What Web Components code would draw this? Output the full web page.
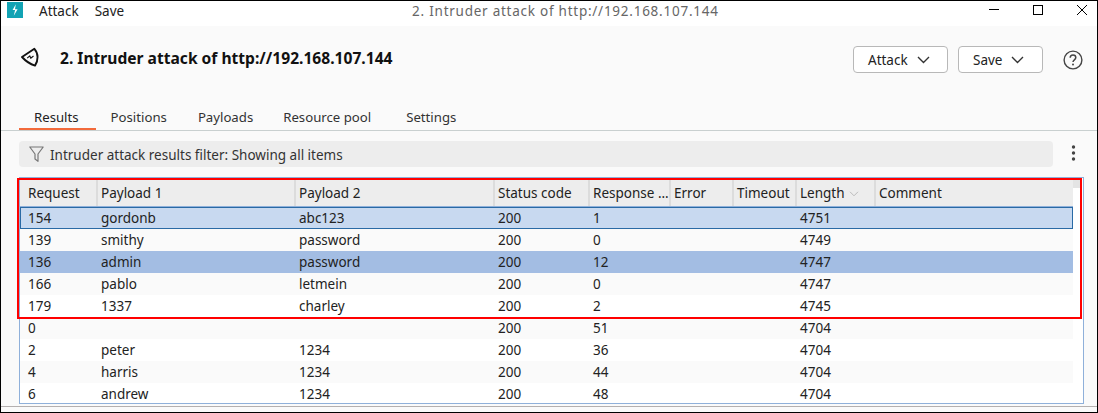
<!DOCTYPE html>
<html>
<head>
<meta charset="utf-8">
<title>Intruder attack</title>
<style>
  html, body { margin: 0; padding: 0; height: 100%; overflow: hidden; background: #fafafa; }
  body { font-family: "Noto Sans", "Noto Sans CJK KR", sans-serif; font-size: 13.5px; color: #222; }
</style>
</head>
<body>
<attack-window>
  <title-bar slot="top" heading="2. Intruder attack of http://192.168.107.144"></title-bar>
  <attack-header heading="2. Intruder attack of http://192.168.107.144"></attack-header>
  <tab-bar></tab-bar>
  <filter-bar>Intruder attack results filter: Showing all items</filter-bar>
  <results-table></results-table>
</attack-window>

<script>
const attack_window = document.createElement('template');
attack_window.innerHTML = /*html*/ `
<style>
  :host {
    display: flex;
    flex-direction: column;
    position: relative;
    box-sizing: border-box;
    width: 1098px;
    height: 413px;
    border: 1px solid #000;
    background: #fafafa;
    overflow: hidden;
  }
  #bottom {
    margin-top: 2px;
    height: 1px;
    background: #b4b0b0;
  }
</style>
<slot name="top"></slot>
<slot></slot>
<div id="bottom"></div>
`;

class AttackWindow extends HTMLElement {
  constructor() {
    super();
    this.attachShadow({ mode: 'open' });
    this.shadowRoot.appendChild(attack_window.content.cloneNode(true));
  }
}

const title_bar = document.createElement('template');
title_bar.innerHTML = /*html*/ `
<style>
  :host {
    display: flex;
    align-items: flex-start;
    height: 25px;
    background: #fff;
    font-size: 13.5px;
    line-height: 18px;
  }
  svg { display: block; }
  #logo { margin: 1px 0 0 6px; }
  #menu { display: flex; gap: 16px; margin: 1px 0 0 16px; }
  #title { flex: 1; margin: 1px 0 0 288px; color: #666; letter-spacing: .75px; white-space: nowrap; }
  #controls { display: flex; margin-top: 2px; }
</style>
<svg id="logo" width="16" height="16" viewBox="0 0 16 16">
  <rect width="16" height="16" fill="#12a3b4"/>
  <path d="M8.8 2.2 5.6 8h2.5L6.8 13.8l3.8-6.6H8z" fill="#fff"/>
</svg>
<div id="menu"><span>Attack</span><span>Save</span></div>
<div id="title"></div>
<div id="controls">
  <svg width="44" height="14" viewBox="0 0 44 14"><path d="M0 6.5h10" stroke="#000" stroke-width="1"/></svg>
  <svg width="44" height="14" viewBox="0 0 44 14"><rect x=".5" y="2.5" width="9" height="9" fill="none" stroke="#000" stroke-width="1"/></svg>
  <svg width="20" height="14" viewBox="0 0 20 14"><path d="M0 2l10 10M10 2 0 12" stroke="#000" stroke-width="1"/></svg>
</div>
`;

class TitleBar extends HTMLElement {
  constructor() {
    super();
    this.attachShadow({ mode: 'open' });
    this.shadowRoot.appendChild(title_bar.content.cloneNode(true));
  }

  connectedCallback() {
    this.shadowRoot.querySelector('#title').textContent = this.getAttribute('heading');
  }
}

const attack_header = document.createElement('template');
attack_header.innerHTML = /*html*/ `
<style>
  :host {
    display: flex;
    align-items: flex-start;
    height: 74px;
    box-sizing: border-box;
    padding: 20px 14px 0 19px;
  }
  #mark { margin-top: 1px; display: block; }
  h1 {
    margin: 0 0 0 20px;
    font-size: 15.6px;
    font-weight: 700;
    line-height: 24px;
    color: #111;
    flex: 1;
  }
  #help { margin: 4px 0 0 20px; display: block; }
  drop-button + drop-button { margin-left: 10px; }
</style>
<svg id="mark" width="20" height="20" viewBox="0 0 20 20" fill="none" stroke="#111" stroke-width="1.9" stroke-linejoin="round">
  <path d="M2 10 14.4 1.8C18.6 6.4 18.4 13.6 15 18.6 10.4 17.2 5.6 14 2 10z"/>
  <path d="M7.2 11.2l2.6-2.4.9 2.4 2.8-2.2" stroke-width="1.1"/>
</svg>
<h1></h1>
<drop-button style="width:95px">Attack</drop-button>
<drop-button style="width:85px">Save</drop-button>
<svg id="help" width="20" height="20" viewBox="0 0 20 20" fill="none" stroke="#444" stroke-width="1.4">
  <circle cx="10" cy="10" r="8.9"/>
  <path d="M7.2 7.8C7.2 6.1 8.5 5 10 5s2.8 1.1 2.8 2.6c0 2.1-2.8 2.3-2.8 4.4" stroke-width="1.5"/>
  <circle cx="10" cy="14.6" r="1" fill="#444" stroke="none"/>
</svg>
`;

class AttackHeader extends HTMLElement {
  constructor() {
    super();
    this.attachShadow({ mode: 'open' });
    this.shadowRoot.appendChild(attack_header.content.cloneNode(true));
  }

  connectedCallback() {
    this.shadowRoot.querySelector('h1').textContent = this.getAttribute('heading');
  }
}

const drop_button = document.createElement('template');
drop_button.innerHTML = /*html*/ `
<style>
  :host {
    display: flex;
    align-items: center;
    gap: 9px;
    box-sizing: border-box;
    height: 27px;
    padding-left: 14px;
    border: 1px solid #b8b8b8;
    border-radius: 4px;
    background: #fff;
    font-size: 13.5px;
    color: #222;
  }
</style>
<slot></slot>
<svg width="13" height="8" viewBox="0 0 13 8" fill="none" stroke="#333" stroke-width="1.4"><path d="M1 1l5.5 5.5L12 1"/></svg>
`;

class DropButton extends HTMLElement {
  constructor() {
    super();
    this.attachShadow({ mode: 'open' });
    this.shadowRoot.appendChild(drop_button.content.cloneNode(true));
  }
}

const tab_bar = document.createElement('template');
tab_bar.innerHTML = /*html*/ `
<style>
  :host {
    display: flex;
    height: 31px;
    box-sizing: border-box;
    padding-left: 18px;
    border-bottom: 1px solid #c9d0d0;
    font-size: 13.2px;
  }
  span {
    box-sizing: border-box;
    height: 30px;
    padding: 7px 16px 0;
    line-height: 20px;
    color: #333;
  }
  span.active {
    padding: 7px 17px 0 15px;
    border-bottom: 2px solid #f26a3b;
    color: #222;
  }
  span.active + span { padding: 7px 15px 0; }
  span.payloads { padding-right: 14px; }
  span.pool { padding-right: 19px; }
</style>
<span class="active">Results</span>
<span>Positions</span>
<span class="payloads">Payloads</span>
<span class="pool">Resource pool</span>
<span>Settings</span>
`;

class TabBar extends HTMLElement {
  constructor() {
    super();
    this.attachShadow({ mode: 'open' });
    this.shadowRoot.appendChild(tab_bar.content.cloneNode(true));
  }
}

const filter_bar = document.createElement('template');
filter_bar.innerHTML = /*html*/ `
<style>
  :host {
    display: flex;
    align-items: center;
    height: 26px;
    margin: 10px 20px 0 18px;
    font-size: 13.5px;
    color: #333;
  }
  #box {
    flex: 1;
    height: 100%;
    display: flex;
    align-items: center;
    gap: 6px;
    padding-left: 10px;
    background: #ededed;
    border-radius: 4px;
  }
  #label { padding-top: 2px; }
  #kebab { margin: -2px 0 0 17px; display: block; }
</style>
<div id="box">
  <svg width="15" height="16" viewBox="0 0 15 16" fill="none" stroke="#777" stroke-width="1.2" stroke-linejoin="round"><path d="M.8 1h13.4L9 8v7.3L6 13V8z"/></svg>
  <span id="label"><slot></slot></span>
</div>
<svg id="kebab" width="7" height="16" viewBox="0 0 7 16" fill="#444"><circle cx="3.5" cy="2" r="1.7"/><circle cx="3.5" cy="8" r="1.7"/><circle cx="3.5" cy="14" r="1.7"/></svg>
`;

class FilterBar extends HTMLElement {
  constructor() {
    super();
    this.attachShadow({ mode: 'open' });
    this.shadowRoot.appendChild(filter_bar.content.cloneNode(true));
  }
}

const results_table = document.createElement('template');
results_table.innerHTML = /*html*/ `
<style>
  :host {
    display: block;
    position: relative;
    box-sizing: border-box;
    height: 227px;
    margin: 10px 13px 0 18px;
    border: 1px solid #8fb0da;
    background: #fff;
    font-size: 13.5px;
    color: #222;
  }
  #scroll { height: 100%; overflow: hidden; margin-right: 10px; }
  .row {
    display: grid;
    grid-template-columns: 76px 198px 199px 95px 81px 63px 63px 79px 1fr;
    box-sizing: border-box;
    height: 22px;
    align-items: center;
    line-height: 20px;
  }
  .row:nth-child(odd) { background: #fafafa; }
  .row span { padding-left: 5px; white-space: nowrap; }
  .row span:first-child { padding-left: 8px; }
  #head {
    height: 29px;
    padding-top: 2px;
    background: #ededed;
    border-bottom: 1px solid #8fb0da;
    align-items: stretch;
  }
  #head span {
    display: flex;
    align-items: center;
    gap: 4px;
    box-sizing: border-box;
    border-left: 2px solid #dcdcdc;
    padding-left: 3px;
  }
  #head span:first-child { border-left: 0; padding-left: 8px; }
  #head svg { margin-top: 1px; }
  .row.focus {
    background: #c8d9f0;
    outline: 1px solid #2a6aa5;
    outline-offset: -1px;
  }
  .row.picked { background: #a3bde3; }
  #thumb {
    position: absolute;
    top: 2px;
    right: 2px;
    width: 8px;
    height: 8px;
    background: #e4e4e4;
  }
  #mark {
    position: absolute;
    left: -3px;
    right: 1px;
    top: 0;
    height: 141px;
    box-sizing: border-box;
    border: 2px solid #f00;
    pointer-events: none;
  }
</style>
<div id="scroll"></div>
<div id="thumb"></div>
<div id="mark"></div>
`;

const COLUMNS = ['Request', 'Payload 1', 'Payload 2', 'Status code', 'Response ...', 'Error', 'Timeout', 'Length', 'Comment'];

const RESULTS = [
  ['154', 'gordonb', 'abc123', '200', '1', '4751', 'focus'],
  ['139', 'smithy', 'password', '200', '0', '4749'],
  ['136', 'admin', 'password', '200', '12', '4747', 'picked'],
  ['166', 'pablo', 'letmein', '200', '0', '4747'],
  ['179', '1337', 'charley', '200', '2', '4745'],
  ['0', '', '', '200', '51', '4704'],
  ['2', 'peter', '1234', '200', '36', '4704'],
  ['4', 'harris', '1234', '200', '44', '4704'],
  ['6', 'andrew', '1234', '200', '48', '4704'],
];

class ResultsTable extends HTMLElement {
  constructor() {
    super();
    this.attachShadow({ mode: 'open' });
    this.shadowRoot.appendChild(results_table.content.cloneNode(true));
  }

  connectedCallback() {
    const scroll = this.shadowRoot.querySelector('#scroll');
    const sort = '<svg width="10" height="6" viewBox="0 0 10 6" fill="none" stroke="#bbb"><path d="M1 .8l4 4 4-4"/></svg>';
    const head = COLUMNS.map(c => `<span>${c}${c === 'Length' ? sort : ''}</span>`).join('');
    const rows = RESULTS.map(([req, p1, p2, status, resp, len, cls]) => `
      <div class="row ${cls || ''}">
        <span>${req}</span><span>${p1}</span><span>${p2}</span><span>${status}</span><span>${resp}</span>
        <span></span><span></span><span>${len}</span><span></span>
      </div>`).join('');
    scroll.innerHTML = `<div class="row" id="head">${head}</div>${rows}`;
  }
}

window.customElements.define('drop-button', DropButton);
window.customElements.define('attack-window', AttackWindow);
window.customElements.define('title-bar', TitleBar);
window.customElements.define('attack-header', AttackHeader);
window.customElements.define('tab-bar', TabBar);
window.customElements.define('filter-bar', FilterBar);
window.customElements.define('results-table', ResultsTable);
</script>
</body>
</html>
